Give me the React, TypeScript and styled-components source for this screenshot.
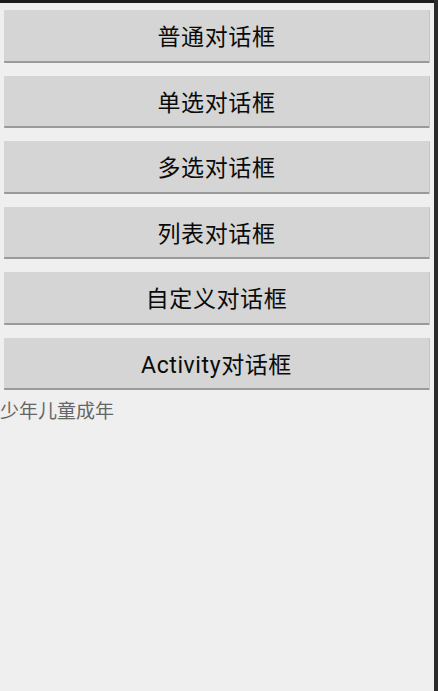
import React from "react";
import styled, { createGlobalStyle } from "styled-components";

const GlobalStyle = createGlobalStyle`
  html, body {
    margin: 0;
    padding: 0;
    background: #efefef;
  }
  body {
    font-family: Roboto, "Noto Sans CJK SC", sans-serif;
  }
`;

const Screen = styled.div`
  display: flex;
  width: 438px;
  height: 691px;
  background: #efefef;
  overflow: hidden;
`;

const Main = styled.div`
  flex: 1;
  display: flex;
  flex-direction: column;
`;

const StatusEdge = styled.div`
  height: 3px;
  background: #1c1c1c;
`;

const ButtonList = styled.div`
  display: flex;
  flex-direction: column;
  gap: 13px;
  padding: 7px 4px 0 4px;
`;

const DialogButton = styled.button`
  box-sizing: border-box;
  height: 52.5px;
  margin: 0;
  padding: 0;
  border: none;
  border-bottom: 2px solid #9a9a9a;
  border-right: 1px solid #c4c4c4;
  border-radius: 1px;
  background: #d5d5d5;
  color: #0a0a0a;
  font-family: Roboto, "Noto Sans CJK SC", sans-serif;
  font-size: 23px;
  letter-spacing: 0.6px;
  display: flex;
  align-items: center;
  justify-content: center;
  cursor: pointer;
`;

const Caption = styled.div`
  margin-top: 8px;
  font-size: 19px;
  line-height: 23px;
  color: #666;
  font-family: "Noto Sans CJK SC", sans-serif;
`;

const SideEdge = styled.div`
  width: 4px;
  background: #2a2a2a;
`;

const labels = ["普通对话框", "单选对话框", "多选对话框", "列表对话框", "自定义对话框", "Activity对话框"];

export default function App() {
  return (
    <>
      <GlobalStyle />
      <Screen>
        <Main>
          <StatusEdge />
          <ButtonList>
            {labels.map((label) => (
              <DialogButton key={label}>{label}</DialogButton>
            ))}
          </ButtonList>
          <Caption>少年儿童成年</Caption>
        </Main>
        <SideEdge />
      </Screen>
    </>
  );
}
